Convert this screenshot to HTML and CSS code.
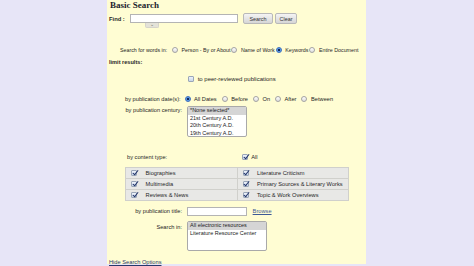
FILE: index.html
```html
<!DOCTYPE html>
<html lang="en">
<head>
    <meta charset="UTF-8">
    <title>Basic Search</title>
    <link rel="stylesheet" href="styles.css">
</head>
<body>
    <div class="page">
        <form class="search-panel" id="basicSearch">
            <h1>Basic Search</h1>

            <!-- Find box -->
            <div class="find-row">
                <label for="findText">Find :</label>
                <input type="text" id="findText" class="find-input">
                <button type="submit" class="btn btn-search">Search</button>
                <button type="reset" class="btn btn-clear">Clear</button>
            </div>
            <div class="find-handle">&#8964;</div>

            <div class="words-row">
                <span class="words-label">Search for words in:</span>
                <label><input type="radio" name="scope"> Person - By or About</label>
                <label><input type="radio" name="scope"> Name of Work</label>
                <label><input type="radio" name="scope" checked> Keywords</label>
                <label><input type="radio" name="scope"> Entire Document</label>
            </div>

            <h2>limit results:</h2>

            <div class="peer-row">
                <label><input type="checkbox"> to peer-reviewed publications</label>
            </div>

            <div class="date-row">
                <span class="date-label">by publication date(s):</span>
                <label><input type="radio" name="dates" checked> All Dates</label>
                <label><input type="radio" name="dates"> Before</label>
                <label><input type="radio" name="dates"> On</label>
                <label><input type="radio" name="dates"> After</label>
                <label><input type="radio" name="dates"> Between</label>
            </div>

            <div class="field-row century-row">
                <label for="century">by publication century:</label>
                <select id="century" class="listbox century-list" multiple size="4">
                    <option selected>*None selected*</option>
                    <option>21st Century A.D.</option>
                    <option>20th Century A.D.</option>
                    <option>19th Century A.D.</option>
                </select>
            </div>

            <!-- Content types -->
            <div class="content-head">
                <span>by content type:</span>
                <label><input type="checkbox" checked> All</label>
            </div>
            <table class="content-types">
                <tr>
                    <td><label><input type="checkbox" checked> Biographies</label></td>
                    <td><label><input type="checkbox" checked> Literature Criticism</label></td>
                </tr>
                <tr>
                    <td><label><input type="checkbox" checked> Multimedia</label></td>
                    <td><label><input type="checkbox" checked> Primary Sources &amp; Literary Works</label></td>
                </tr>
                <tr>
                    <td><label><input type="checkbox" checked> Reviews &amp; News</label></td>
                    <td><label><input type="checkbox" checked> Topic &amp; Work Overviews</label></td>
                </tr>
            </table>

            <div class="field-row title-row">
                <label for="pubTitle">by publication title:</label>
                <div>
                    <input type="text" id="pubTitle" class="title-input">
                    <a href="#browse" class="browse-link">Browse</a>
                </div>
            </div>

            <div class="field-row searchin-row">
                <label for="searchIn">Search in:</label>
                <select id="searchIn" class="listbox searchin-list" multiple size="4">
                    <option selected>All electronic resources</option>
                    <option>Literature Resource Center</option>
                </select>
            </div>

            <a href="#hide" class="hide-link">Hide Search Options</a>
        </form>
    </div>
</body>
</html>
```

FILE: styles.css
```css
* {
    margin: 0;
    padding: 0;
    box-sizing: border-box;
}

body {
    font-family: "Liberation Sans", Arial, sans-serif;
    font-size: 5.7px;
    color: #262626;
    background-color: #e7e5f7;
}

.page {
    height: 266px;
}

.search-panel {
    margin-left: 107px;
    width: 259px;
    height: 264px;
    padding-left: 2px;
    background-color: #fffdd3;
}

h1 {
    font-family: "Liberation Serif", "Times New Roman", serif;
    font-size: 9px;
    line-height: 10px;
    color: #1d1d2e;
    padding-left: 1px;
}

h2 {
    font-size: 5.6px;
    font-weight: bold;
    line-height: 8px;
    margin-top: 4px;
}

label {
    white-space: nowrap;
}

/* radios and checkboxes */
input[type="radio"],
input[type="checkbox"] {
    appearance: none;
    -webkit-appearance: none;
    position: relative;
    width: 6px;
    height: 6px;
    margin: 0 2px 0 0;
    border: 1px solid #a3a3a3;
    background: linear-gradient(#ffffff, #dedede);
    vertical-align: -1px;
}

input[type="radio"] {
    border-radius: 50%;
}

input[type="radio"]:checked {
    border-color: #3a6cbc;
    background: radial-gradient(circle, #14285c 0 28%, #4a8fe2 40%, #8cc0f4 100%);
}

input[type="checkbox"] {
    border-radius: 1px;
    background: linear-gradient(#eef3fb, #c9d6e8);
    border-color: #9aa6b8;
}

input[type="checkbox"]:checked::after {
    content: "";
    position: absolute;
    left: 1.5px;
    top: -2.5px;
    width: 2px;
    height: 5px;
    border: solid #1c2f66;
    border-width: 0 1.5px 1.5px 0;
    transform: rotate(38deg);
}

/* find row */
.find-row {
    display: flex;
    align-items: center;
    height: 11px;
    margin-top: 3px;
}

.find-row label {
    font-weight: bold;
    font-size: 5.8px;
    width: 21px;
}

.find-input {
    width: 108px;
    height: 9px;
    border: 1px solid #b4b4b4;
    background: #fff;
}

.btn {
    height: 11px;
    font-family: "Liberation Sans", Arial, sans-serif;
    font-size: 5.4px;
    color: #333;
    border: 1px solid #b9b9b9;
    border-radius: 2px;
    background: linear-gradient(#f4f4f4, #d6d6d6);
}

.btn-search {
    width: 30px;
    margin-left: 5px;
}

.btn-clear {
    width: 22px;
    margin-left: 2px;
}

.find-handle {
    width: 14px;
    height: 5px;
    margin: -1px 0 0 36px;
    font-size: 5px;
    line-height: 2px;
    text-align: center;
    color: #6f6f6f;
    background: #e4e2d8;
    border: 1px solid #d6d4ca;
    border-top: none;
    border-radius: 0 0 2px 2px;
}

/* search for words in */
.words-row {
    display: flex;
    align-items: center;
    height: 8px;
    margin-top: 18px;
    padding-left: 11px;
    font-size: 5.3px;
}

.words-row > * {
    flex-shrink: 0;
    white-space: nowrap;
}

.words-label {
    margin-right: 5px;
}

.words-row label {
    margin-right: 1px;
}

.peer-row {
    height: 8px;
    line-height: 8px;
    margin-top: 9px;
    padding-left: 79px;
    font-size: 6px;
}

.date-row {
    display: flex;
    align-items: center;
    height: 8px;
    margin-top: 12px;
    padding-left: 16px;
}

.date-row > * {
    flex-shrink: 0;
    white-space: nowrap;
}

.date-label {
    margin-right: 4px;
}

.date-row label {
    margin-right: 5px;
}

/* label + field rows */
.field-row {
    display: grid;
    grid-template-columns: 73px 1fr;
    column-gap: 5px;
    align-items: start;
}

.field-row > label {
    text-align: right;
    line-height: 7px;
    padding-top: 1px;
}

.century-row {
    margin-top: 3px;
}

.listbox {
    font-family: "Liberation Sans", Arial, sans-serif;
    font-size: 5.5px;
    color: #222;
    border: 1px solid #a9a9a9;
    background: #fff;
    overflow: hidden;
    outline: none;
}

.listbox option {
    height: 7.5px;
    line-height: 7.5px;
    padding: 0 2px;
}

.listbox option:checked {
    background: #d5d5d5;
    color: #222;
}

.century-list {
    width: 60px;
    height: 31px;
}

.searchin-list {
    width: 80px;
    height: 30px;
}

/* content types */
.content-head {
    display: grid;
    grid-template-columns: 112px 112px;
    height: 8px;
    align-items: center;
    margin: 16px 0 6px 16px;
    padding-left: 2px;
}

.content-head label {
    padding-left: 3px;
}

.content-types {
    margin-left: 16px;
    width: 224px;
    border-collapse: collapse;
    table-layout: fixed;
}

.content-types td {
    height: 11px;
    padding-left: 5px;
    background: #e8e8e6;
    border: 1px solid #d0d0cc;
}

.content-types input {
    margin-right: 7px;
}

.title-row {
    margin-top: 6px;
    align-items: center;
}

.title-row > label {
    padding-top: 0;
}

.title-input {
    width: 60px;
    height: 9px;
    border: 1px solid #b4b4b4;
    background: #fff;
    vertical-align: middle;
}

.browse-link {
    margin-left: 4px;
    color: #3d5a96;
}

.searchin-row {
    margin-top: 5px;
}

.searchin-row > label {
    padding-top: 3px;
}

.hide-link {
    display: block;
    width: max-content;
    margin-top: 7px;
    line-height: 8px;
    color: #27386b;
}
```
